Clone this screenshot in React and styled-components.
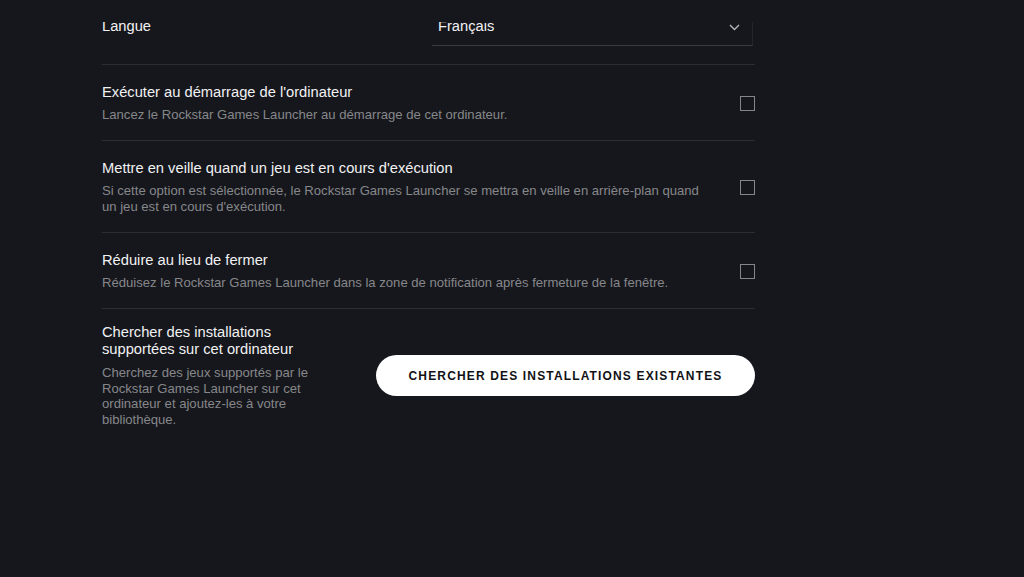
import React from 'react'
import styled, { createGlobalStyle } from 'styled-components';

const GlobalStyle = createGlobalStyle`
html, body {
  margin: 0;
  padding: 0;
  background: #16171c;
}
body {
  font-family: "Liberation Sans", Arial, sans-serif;
  -webkit-font-smoothing: antialiased;
}
`;

const Page = styled.div`
width: 1024px;
height: 577px;
display: flex;
flex-direction: column;
background: #16171c;
overflow: hidden;
`;

const TopBar = styled.div`
height: 22px;
flex-shrink: 0;
background: #16171c;
`;

const ScrollArea = styled.div`
flex: 1;
overflow: hidden;
`;

const Settings = styled.div`
width: 653px;
margin: -30px 0 0 102px;
display: flex;
flex-direction: column;
`;

const Row = styled.div`
display: flex;
align-items: center;
justify-content: space-between;
gap: 24px;
padding: ${p => p.$pad || '18px 0 17px'};
border-bottom: ${p => p.$last ? 'none' : '1px solid #2d2e33'};
`;

const TextCol = styled.div`
display: flex;
flex-direction: column;
gap: ${p => p.$gap || '6px'};
max-width: ${p => p.$width || '606px'};
`;

const Title = styled.div`
color: #f1f1f3;
font-size: 14.7px;
line-height: ${p => p.$lh || '18px'};
`;

const Desc = styled.div`
color: #86878b;
font-size: 13.1px;
line-height: ${p => p.$lh || '16px'};
`;

const Label = styled.div`
color: #f1f1f3;
font-size: 14.7px;
line-height: 18px;
padding-bottom: 3px;
flex: 1;
`;

const Select = styled.div`
box-sizing: border-box;
width: 321px;
height: 37px;
margin-right: 2px;
padding: 0 6px;
display: flex;
align-items: center;
justify-content: space-between;
border-bottom: 1px solid #3a3b40;
border-right: 1px solid #25262b;
color: #f1f1f3;
font-size: 14.7px;
`;

const SelectValue = styled.span`
padding-bottom: 3px;
`;

const Chevron = styled.svg`
width: 11px;
height: 7px;
margin-right: 6px;
`;

const Checkbox = styled.div`
width: 13px;
height: 13px;
flex-shrink: 0;
border: 1.5px solid #85868a;
`;

const Button = styled.button`
width: 379px;
height: 41px;
flex-shrink: 0;
border: none;
border-radius: 21px;
background: #ffffff;
color: #121216;
font-family: "Liberation Sans", Arial, sans-serif;
font-weight: 700;
font-size: 12px;
letter-spacing: 1.15px;
cursor: pointer;
`;

const options = [
  {
    title: "Exécuter au démarrage de l'ordinateur",
    desc: "Lancez le Rockstar Games Launcher au démarrage de cet ordinateur."
  },
  {
    title: "Mettre en veille quand un jeu est en cours d'exécution",
    desc: "Si cette option est sélectionnée, le Rockstar Games Launcher se mettra en veille en arrière-plan quand un jeu est en cours d'exécution."
  },
  {
    title: "Réduire au lieu de fermer",
    desc: "Réduisez le Rockstar Games Launcher dans la zone de notification après fermeture de la fenêtre."
  }
];

const App = () => {
  return (
    <>
      <GlobalStyle />
      <Page>
        <TopBar />
        <ScrollArea>
          <Settings>
            <Row $pad="17px 0 18px">
              <Label>Langue</Label>
              <Select>
                <SelectValue>Français</SelectValue>
                <Chevron viewBox="0 0 11 7">
                  <path d="M1 1 L5.5 5.5 L10 1" fill="none" stroke="#b5b6ba" strokeWidth="1.4" />
                </Chevron>
              </Select>
            </Row>
            {options.map(o => (
              <Row key={o.title}>
                <TextCol>
                  <Title>{o.title}</Title>
                  <Desc>{o.desc}</Desc>
                </TextCol>
                <Checkbox />
              </Row>
            ))}
            <Row $last $pad="15px 0">
              <TextCol $width="222px" $gap="7px">
                <Title $lh="17px">Chercher des installations supportées sur cet ordinateur</Title>
                <Desc $lh="15.5px">Cherchez des jeux supportés par le Rockstar Games Launcher sur cet ordinateur et ajoutez-les à votre bibliothèque.</Desc>
              </TextCol>
              <Button>CHERCHER DES INSTALLATIONS EXISTANTES</Button>
            </Row>
          </Settings>
        </ScrollArea>
      </Page>
    </>
  )
}

export default App
